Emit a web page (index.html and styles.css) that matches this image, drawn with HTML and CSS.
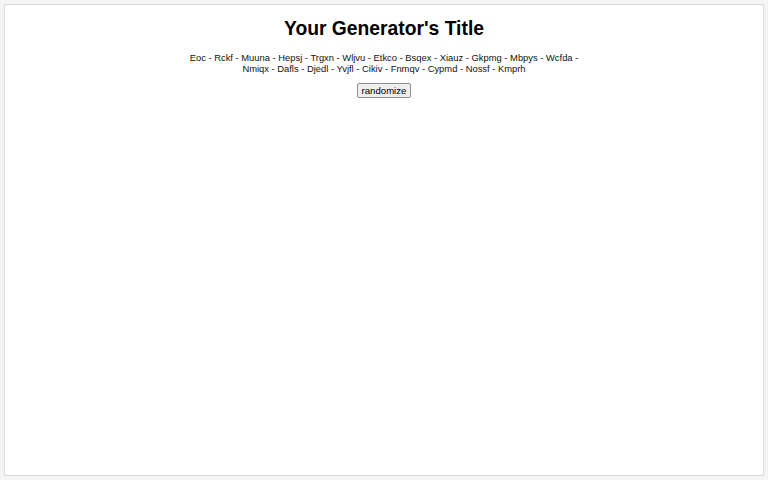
FILE: index.html
```html
<!DOCTYPE html>
<html>
<head>
<meta charset="utf-8">
<link rel="stylesheet" href="styles.css">
</head>
<body>
<div class="card">
  <h1 class="title">Your Generator's Title</h1>
  <p class="output">Eoc - Rckf - Muuna - Hepsj - Trgxn - Wljvu - Etkco - Bsqex - Xiauz - Gkpmg - Mbpys - Wcfda - Nmiqx - Dafls - Djedl - Yvjfl - Cikiv - Fnmqv - Cypmd - Nossf - Kmprh</p>
  <div class="actions"><button class="btn">randomize</button></div>
</div>
</body>
</html>
```
FILE: styles.css
```css
html, body { margin: 0; padding: 0; }
body {
  background: #f4f4f4;
  padding: 4px;
  height: 480px;
  box-sizing: border-box;
  font-family: "Liberation Sans", Arial, sans-serif;
}
.card {
  background: #fff;
  border: 1px solid #dcdcdc;
  height: 100%;
  box-sizing: border-box;
  text-align: center;
  padding-top: 14px;
}
.title {
  font-size: 19.3px;
  font-weight: bold;
  margin: 0;
  line-height: 19px;
}
.output {
  font-size: 9.4px;
  line-height: 11px;
  margin: 14px auto 0;
  width: 405px;
  color: #111;
}
.actions { margin-top: 6px; }
.btn {
  font-family: "Liberation Sans", Arial, sans-serif;
  font-size: 9.6px;
  padding: 1px 4px;
  border: 1px solid #8f8f8f;
  border-radius: 2px;
  background: #efefef;
  color: #000;
}
```
